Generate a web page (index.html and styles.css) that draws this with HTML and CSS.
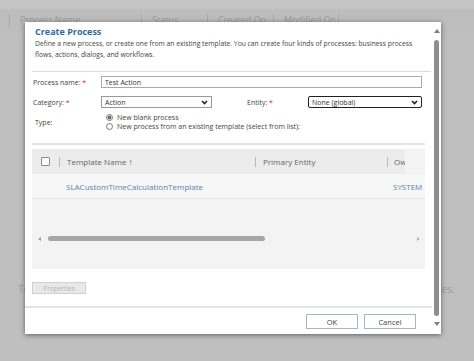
FILE: index.html
```html
<!DOCTYPE html>
<html lang="en">
<head>
    <meta charset="UTF-8">
    <meta name="viewport" content="width=device-width, initial-scale=1.0">
    <title>Create Process</title>
    <link rel="stylesheet" href="styles.css">
</head>
<body>
    <div class="page">
        <div class="topbar"></div>
        <div class="columns">
            <div class="col col-name">Process Name</div>
            <div class="col">Status</div>
            <div class="col">Created On</div>
            <div class="col col-last">Modified On</div>
        </div>
        <p class="note">
            <span>To</span>
            <span>processes.</span>
        </p>
    </div>

    <div class="dialog">
        <div class="dialog-main">
            <div class="dialog-head">
                <h1>Create Process</h1>
                <p>Define a new process, or create one from an existing template. You can create four kinds of processes: business process flows, actions, dialogs, and workflows.</p>
            </div>

            <div class="form">
                <div class="form-row">
                    <label class="label">Process name: <span class="req">*</span></label>
                    <div class="field field-text">Test Action</div>
                </div>
                <div class="form-row row-gap">
                    <label class="label">Category: <span class="req">*</span></label>
                    <div class="field field-select field-category">
                        <span>Action</span>
                        <svg width="7" height="5" viewBox="0 0 7 5"><path d="M1 1 L3.5 3.5 L6 1" fill="none" stroke="#222" stroke-width="1.6"/></svg>
                    </div>
                    <label class="label label-entity">Entity: <span class="req">*</span></label>
                    <div class="field field-select field-focus">
                        <span>None (global)</span>
                        <svg width="7" height="5" viewBox="0 0 7 5"><path d="M1 1 L3.5 3.5 L6 1" fill="none" stroke="#222" stroke-width="1.6"/></svg>
                    </div>
                </div>
                <div class="form-row type-row">
                    <label class="label label-type">Type:</label>
                    <div class="radios">
                        <div class="radio-line"><span class="radio checked"></span>New blank process</div>
                        <div class="radio-line"><span class="radio"></span>New process from an existing template (select from list):</div>
                    </div>
                </div>
            </div>

            <div class="grid-wrap">
                <div class="grid">
                    <div class="grid-header">
                        <span class="checkbox"></span>
                        <span class="sep"></span>
                        <span class="cell cell-name">Template Name &#8593;</span>
                        <span class="sep"></span>
                        <span class="cell cell-entity">Primary Entity</span>
                        <span class="sep"></span>
                        <span class="cell cell-owner">Ow</span>
                    </div>
                    <div class="grid-row">
                        <span class="cell cell-name">SLACustomTimeCalculationTemplate</span>
                        <span class="cell cell-entity"></span>
                        <span class="cell cell-owner">SYSTEM</span>
                    </div>
                    <div class="grid-space"></div>
                    <div class="hscroll">
                        <span class="arrow-left"></span>
                        <span class="hthumb"></span>
                        <span class="hspace"></span>
                        <span class="arrow-right"></span>
                    </div>
                </div>
            </div>

            <div class="actions">
                <button class="btn-props" disabled>Properties</button>
            </div>

            <div class="footer">
                <button class="btn">OK</button>
                <button class="btn">Cancel</button>
            </div>
        </div>
        <div class="vscroll">
            <span class="arrow-up"></span>
            <span class="vthumb"></span>
            <span class="arrow-down"></span>
        </div>
    </div>
</body>
</html>
```

FILE: styles.css
```css
body {
    margin: 0;
    padding: 0;
    font-family: "Open Sans", "Noto Sans", sans-serif;
    background-color: #bfbfbf;
    color: #333;
}

.page {
    width: 474px;
    height: 361px;
    overflow: hidden;
}

.topbar {
    height: 9px;
    background-color: #c5c5c5;
}

.columns {
    display: flex;
    align-items: center;
    height: 24px;
    padding-left: 9px;
    background-color: #bdbdbd;
    font-size: 9px;
    color: #9a9a9a;
}

.col {
    width: 55px;
    height: 14px;
    line-height: 12px;
    padding-left: 10px;
    border-left: 1px solid #a9a9a9;
    white-space: nowrap;
    overflow: hidden;
}

.col-name {
    width: 121px;
}

.col-last {
    width: 54px;
    border-right: 1px solid #a9a9a9;
}

.note {
    display: flex;
    justify-content: space-between;
    width: 437px;
    margin: 250px 0 0 18px;
    font-size: 10px;
    line-height: 12px;
    color: #9c9c9c;
}

/* dialog */

.dialog {
    position: absolute;
    left: 25px;
    top: 22px;
    width: 416px;
    height: 312px;
    display: flex;
    background-color: #fff;
    box-shadow: 0 1px 5px rgba(0, 0, 0, 0.5);
}

.dialog-main {
    flex: 1;
    min-width: 0;
    display: flex;
    flex-direction: column;
}

.dialog-head {
    padding: 4px 15px 11px 3px;
    margin: 0 1px 0 7px;
    border-bottom: 1px solid #dcdcdc;
}

.dialog-head h1 {
    margin: 0;
    font-size: 9px;
    line-height: 12px;
    font-weight: bold;
    color: #2f6aa3;
}

.dialog-head p {
    margin: 0;
    font-size: 6.75px;
    line-height: 11px;
    color: #444;
}

.form {
    padding: 4px 10px 0 8px;
    font-size: 7px;
    color: #444;
}

.form-row {
    display: flex;
    align-items: center;
}

.row-gap {
    margin-top: 8px;
}

.label {
    width: 68px;
    flex-shrink: 0;
    white-space: nowrap;
}

.req {
    color: #d22;
}

.label-entity {
    width: 61px;
    margin-left: 35px;
}

.field {
    height: 12px;
    box-sizing: border-box;
    border: 1px solid #aaa;
    padding: 0 3px;
    display: flex;
    align-items: center;
    justify-content: space-between;
    font-size: 7px;
    color: #333;
}

.field-text {
    flex: 1;
}

.field-category {
    width: 111px;
}

.field-select {
    border-color: #999;
}

.field-select:last-child {
    flex: 1;
}

.field-focus {
    border: 1px solid #222;
    border-radius: 2px;
}

.type-row {
    align-items: center;
    margin-top: 5px;
}

.label-type {
    padding-left: 2px;
    width: 66px;
}

.radios {
    margin-left: 5px;
}

.radio-line {
    display: flex;
    align-items: center;
    height: 9px;
    line-height: 9px;
}

.radio {
    width: 7px;
    height: 7px;
    box-sizing: border-box;
    border: 1px solid #777;
    border-radius: 50%;
    margin-right: 4px;
    background-color: #fff;
}

.radio.checked {
    background: radial-gradient(circle, #6f6f6f 0 1.8px, #fff 2.2px);
}

/* template grid */

.grid-wrap {
    margin: 12px 7px 0 7px;
    padding-top: 4px;
    border-top: 2px solid #e3e3e3;
}

.grid {
    height: 120px;
    display: flex;
    flex-direction: column;
    background-color: #f4f3f3;
    overflow: hidden;
    font-size: 8px;
}

.grid-header {
    display: flex;
    align-items: center;
    width: 373px;
    height: 25px;
    flex-shrink: 0;
    background-color: #ececec;
    color: #666;
    overflow: hidden;
}

.checkbox {
    width: 9px;
    height: 9px;
    box-sizing: border-box;
    margin-left: 9px;
    border: 1px solid #8a8a8a;
    border-radius: 1px;
    background-color: #fff;
    flex-shrink: 0;
}

.sep {
    width: 1px;
    height: 10px;
    background-color: #b9b9b9;
    flex-shrink: 0;
}

.checkbox + .sep {
    margin-left: 9px;
}

.cell {
    white-space: nowrap;
    flex-shrink: 0;
    overflow: hidden;
}

.grid-header .cell {
    padding-left: 7px;
}

.grid-header .cell-name {
    width: 188px;
}

.grid-header .cell-entity {
    width: 124px;
}

.grid-header .cell-owner {
    width: 14px;
    padding-left: 6px;
}

.grid-row {
    display: flex;
    align-items: center;
    height: 24px;
    flex-shrink: 0;
    padding-left: 34px;
    background-color: #f7f7f7;
    border-bottom: 1px solid #e6e6e6;
    color: #5b7eaf;
}

.grid-row .cell-name {
    width: 195px;
}

.grid-row .cell-entity {
    width: 132px;
}

.grid-space {
    flex: 1;
}

.hscroll {
    display: flex;
    align-items: center;
    height: 5px;
    padding: 0 5px 0 6px;
    margin-bottom: 28px;
}

.arrow-left {
    width: 0;
    height: 0;
    border-style: solid;
    border-width: 2px 3px 2px 0;
    border-color: transparent #9a9a9a transparent transparent;
}

.hthumb {
    width: 217px;
    height: 5px;
    margin-left: 7px;
    border-radius: 3px;
    background-color: #a6a6a6;
}

.hspace {
    flex: 1;
}

.arrow-right {
    width: 0;
    height: 0;
    border-style: solid;
    border-width: 2px 0 2px 3px;
    border-color: transparent transparent transparent #b0b0b0;
}

.actions {
    padding: 13px 0 0 7px;
}

.btn-props {
    display: block;
    width: 54px;
    height: 12px;
    padding: 0;
    border: 1px solid #d0d0d0;
    background-color: #e8e8e8;
    color: #b5b5b5;
    font-family: inherit;
    font-size: 6.5px;
}

.footer {
    display: flex;
    justify-content: flex-end;
    gap: 6px;
    margin-top: 12px;
    padding: 6px 16px 0 0;
    border-top: 2px solid #e3e3e3;
}

.btn {
    width: 52px;
    height: 15px;
    padding: 0;
    border: 1px solid #a3b8c3;
    background-color: #fff;
    color: #444;
    font-family: inherit;
    font-size: 7.5px;
}

/* dialog scrollbar */

.vscroll {
    width: 9px;
    display: flex;
    flex-direction: column;
    align-items: center;
    padding-top: 7px;
}

.arrow-up {
    width: 0;
    height: 0;
    border-style: solid;
    border-width: 0 3px 4px 3px;
    border-color: transparent transparent #7d7d7d transparent;
}

.vthumb {
    width: 5px;
    height: 276px;
    margin: 7px 0 6px;
    border-radius: 3px;
    background-color: #8e8e8e;
}

.arrow-down {
    width: 0;
    height: 0;
    border-style: solid;
    border-width: 4px 3px 0 3px;
    border-color: #7d7d7d transparent transparent transparent;
}
```
